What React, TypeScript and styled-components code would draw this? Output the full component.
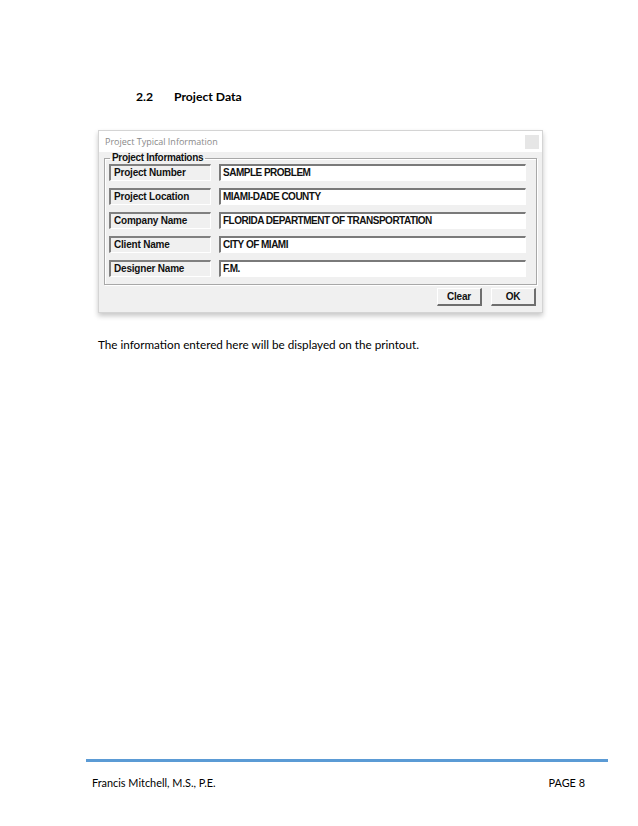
import React from 'react';
import styled, { createGlobalStyle } from 'styled-components';

const GlobalStyle = createGlobalStyle`
  html, body {
    margin: 0;
    padding: 0;
    background: #fff;
  }
`;

const StyledPage = styled.div`
  box-sizing: border-box;
  display: flex;
  flex-direction: column;
  font-family: Lato, 'Open Sans', sans-serif;
  height: 826px;
  padding: 89px 0 0;
  position: relative;
  width: 638px;
`;

const StyledHeading = styled.h2`
  color: #000;
  display: flex;
  font-size: 12.2px;
  font-weight: 700;
  line-height: 16px;
  margin: 0 0 25px 136px;
`;

const StyledHeadingNumber = styled.span`
  width: 38px;
`;

const StyledDialog = styled.div`
  background: #f0f0f0;
  border: 1px solid #d4d4d4;
  box-shadow: 0 3px 5px rgba(0, 0, 0, 0.22);
  display: flex;
  flex-direction: column;
  margin-left: 98px;
  width: 443px;
`;

const StyledTitleBar = styled.div`
  align-items: center;
  background: #fff;
  display: flex;
  height: 21px;
  justify-content: space-between;
  padding: 0 3px 0 6px;
`;

const StyledTitle = styled.span`
  color: #8a8a8a;
  font-family: 'Open Sans', 'Noto Sans', sans-serif;
  font-size: 9px;
`;

const StyledCloseBox = styled.span`
  background: #e6e6e6;
  height: 14px;
  width: 14px;
`;

const StyledBody = styled.div`
  display: flex;
  flex-direction: column;
  padding: 1px 5px 6px 5px;
`;

const StyledGroup = styled.fieldset`
  border: 1px solid #a8a8a8;
  box-shadow: inset 1px 1px 0 #fff, 1px 1px 0 #fff;
  display: flex;
  flex-direction: column;
  gap: 7px;
  margin: 0;
  min-width: 0;
  padding: 1px 10px 7px 4px;
`;

const StyledLegend = styled.legend`
  color: #111;
  font-family: 'Liberation Sans', Arial, sans-serif;
  font-size: 10px;
  font-weight: 700;
  letter-spacing: -0.3px;
  line-height: 10px;
  margin-left: 1px;
  padding: 0 2px;
`;

const StyledRow = styled.div`
  display: flex;
  gap: 8px;
`;

const StyledLabel = styled.div`
  background: #f0f0f0;
  border-color: #808080 #fff #fff #808080;
  border-style: solid;
  border-width: 2px 1px 1px 2px;
  box-sizing: border-box;
  color: #111;
  font-family: 'Liberation Sans', Arial, sans-serif;
  font-size: 10px;
  font-weight: 700;
  height: 17px;
  letter-spacing: -0.2px;
  line-height: 13px;
  padding-left: 3px;
  width: 102px;
`;

const StyledField = styled.div`
  background: #fff;
  border-color: #7a7a7a #fff #fff #7a7a7a;
  border-style: solid;
  border-width: 2px 1px 1px 2px;
  box-sizing: border-box;
  color: #111;
  flex: 1;
  font-family: 'Liberation Sans', Arial, sans-serif;
  font-size: 10px;
  font-weight: 700;
  height: 17px;
  letter-spacing: -0.5px;
  line-height: 14px;
  padding-left: 2px;
`;

const StyledButtonBar = styled.div`
  display: flex;
  gap: 9px;
  justify-content: flex-end;
  padding: 3px 1px 0 0;
`;

const StyledButton = styled.button`
  background: #f0f0f0;
  border-color: #fff #6e6e6e #6e6e6e #fff;
  border-style: solid;
  border-width: 1px 2px 2px 1px;
  box-sizing: border-box;
  color: #111;
  font-family: 'Liberation Sans', Arial, sans-serif;
  font-size: 10px;
  font-weight: 700;
  height: 18px;
  letter-spacing: -0.2px;
  padding: 0;
  width: 45px;
`;

const StyledParagraph = styled.p`
  color: #000;
  font-size: 11.7px;
  line-height: 16px;
  margin: 23px 0 0 98px;
`;

const StyledFooter = styled.footer`
  display: flex;
  flex-direction: column;
  margin: auto 30px 0 86px;
  padding-bottom: 35px;
`;

const StyledFooterRule = styled.div`
  background: #5b9bd5;
  height: 3px;
`;

const StyledFooterText = styled.div`
  color: #000;
  display: flex;
  font-size: 10.9px;
  justify-content: space-between;
  line-height: 16px;
  padding: 13px 23px 0 6px;
`;

const rows = [
  { label: 'Project Number', value: 'SAMPLE PROBLEM' },
  { label: 'Project Location', value: 'MIAMI-DADE COUNTY' },
  { label: 'Company Name', value: 'FLORIDA DEPARTMENT OF TRANSPORTATION' },
  { label: 'Client Name', value: 'CITY OF MIAMI' },
  { label: 'Designer Name', value: 'F.M.' },
];

export default function App() {
  return (
    <>
      <GlobalStyle />
      <StyledPage>
        <StyledHeading>
          <StyledHeadingNumber>2.2</StyledHeadingNumber>
          Project Data
        </StyledHeading>
        <StyledDialog>
          <StyledTitleBar>
            <StyledTitle>Project Typical Information</StyledTitle>
            <StyledCloseBox />
          </StyledTitleBar>
          <StyledBody>
            <StyledGroup>
              <StyledLegend>Project Informations</StyledLegend>
              {rows.map((row) => (
                <StyledRow key={row.label}>
                  <StyledLabel>{row.label}</StyledLabel>
                  <StyledField>{row.value}</StyledField>
                </StyledRow>
              ))}
            </StyledGroup>
            <StyledButtonBar>
              <StyledButton>Clear</StyledButton>
              <StyledButton>OK</StyledButton>
            </StyledButtonBar>
          </StyledBody>
        </StyledDialog>
        <StyledParagraph>The information entered here will be displayed on the printout.</StyledParagraph>
        <StyledFooter>
          <StyledFooterRule />
          <StyledFooterText>
            <span>Francis Mitchell, M.S., P.E.</span>
            <span>PAGE 8</span>
          </StyledFooterText>
        </StyledFooter>
      </StyledPage>
    </>
  );
}
